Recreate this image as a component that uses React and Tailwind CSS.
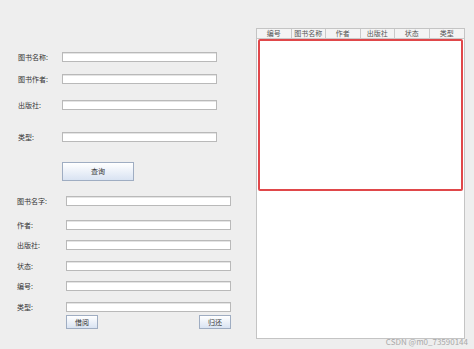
import React from 'react';

const font = { fontFamily: '"Noto Sans CJK SC", "Noto Sans", sans-serif' };

function Field({ label, top, labelW, inputW }) {
  return (
    <div className={`flex items-center ${top}`}>
      <span className={`${labelW} shrink-0 text-[7px] leading-none text-[#333]`}>{label}</span>
      <div className={`${inputW} h-[10px] bg-white border border-[#b9b9b9] shadow-[inset_0_1px_0_#e4e4e4]`} />
    </div>
  );
}

function Btn({ children, w, h }) {
  return (
    <button className={`${w} ${h} flex items-center justify-center text-[7px] leading-none text-[#333] border border-[#9fadc2] bg-gradient-to-b from-white to-[#d9e3f2]`}>
      {children}
    </button>
  );
}

export default function App() {
  const headers = ['编号', '图书名称', '作者', '出版社', '状态', '类型'];

  return (
    <div className="relative w-[474px] h-[349px] bg-[#eeeeee] overflow-hidden flex" style={font}>
      {/* 左侧：查询 + 借还 */}
      <div className="w-[256px] shrink-0 flex flex-col">
        <div className="pl-[18px] flex flex-col">
          <Field label="图书名称:" top="mt-[52px]" labelW="w-[44px]" inputW="w-[155px]" />
          <Field label="图书作者:" top="mt-[12px]" labelW="w-[44px]" inputW="w-[155px]" />
          <Field label="出版社:" top="mt-[16px]" labelW="w-[44px]" inputW="w-[155px]" />
          <Field label="类型:" top="mt-[22px]" labelW="w-[44px]" inputW="w-[155px]" />
          <div className="mt-[20px] ml-[44px]">
            <Btn w="w-[72px]" h="h-[19px]">查询</Btn>
          </div>
        </div>

        <div className="pl-[17px] flex flex-col">
          <Field label="图书名字:" top="mt-[15px]" labelW="w-[49px]" inputW="w-[165px]" />
          <Field label="作者:" top="mt-[14px]" labelW="w-[49px]" inputW="w-[165px]" />
          <Field label="出版社:" top="mt-[10px]" labelW="w-[49px]" inputW="w-[165px]" />
          <Field label="状态:" top="mt-[11px]" labelW="w-[49px]" inputW="w-[165px]" />
          <Field label="编号:" top="mt-[10px]" labelW="w-[49px]" inputW="w-[165px]" />
          <Field label="类型:" top="mt-[11px]" labelW="w-[49px]" inputW="w-[165px]" />
          <div className="mt-[3px] ml-[49px] w-[165px] flex justify-between">
            <Btn w="w-[32px]" h="h-[14px]">借阅</Btn>
            <Btn w="w-[32px]" h="h-[14px]">归还</Btn>
          </div>
        </div>
      </div>

      {/* 右侧：表格 */}
      <div className="mt-[28px] w-[209px] h-[311px] flex flex-col border border-[#c4c4c4] bg-white">
        <div className="grid grid-cols-6 h-[10px] bg-[#f4f4f4] border-b border-[#c9c9c9]">
          {headers.map((h, i) => (
            <div
              key={h}
              className={`flex items-center justify-center text-[7px] leading-none text-[#555] ${i < 5 ? 'border-r border-[#c9c9c9]' : ''}`}
            >
              {h}
            </div>
          ))}
        </div>
        <div className="flex-1 bg-white">
          <div className="mx-[1px] h-[152px] border-2 border-[#e0474a] rounded-[2px]" />
        </div>
      </div>

      <span className="absolute right-[6px] bottom-[3px] text-[8px] leading-none text-[#a9a9a9]">
        CSDN @m0_73590144
      </span>
    </div>
  );
}
